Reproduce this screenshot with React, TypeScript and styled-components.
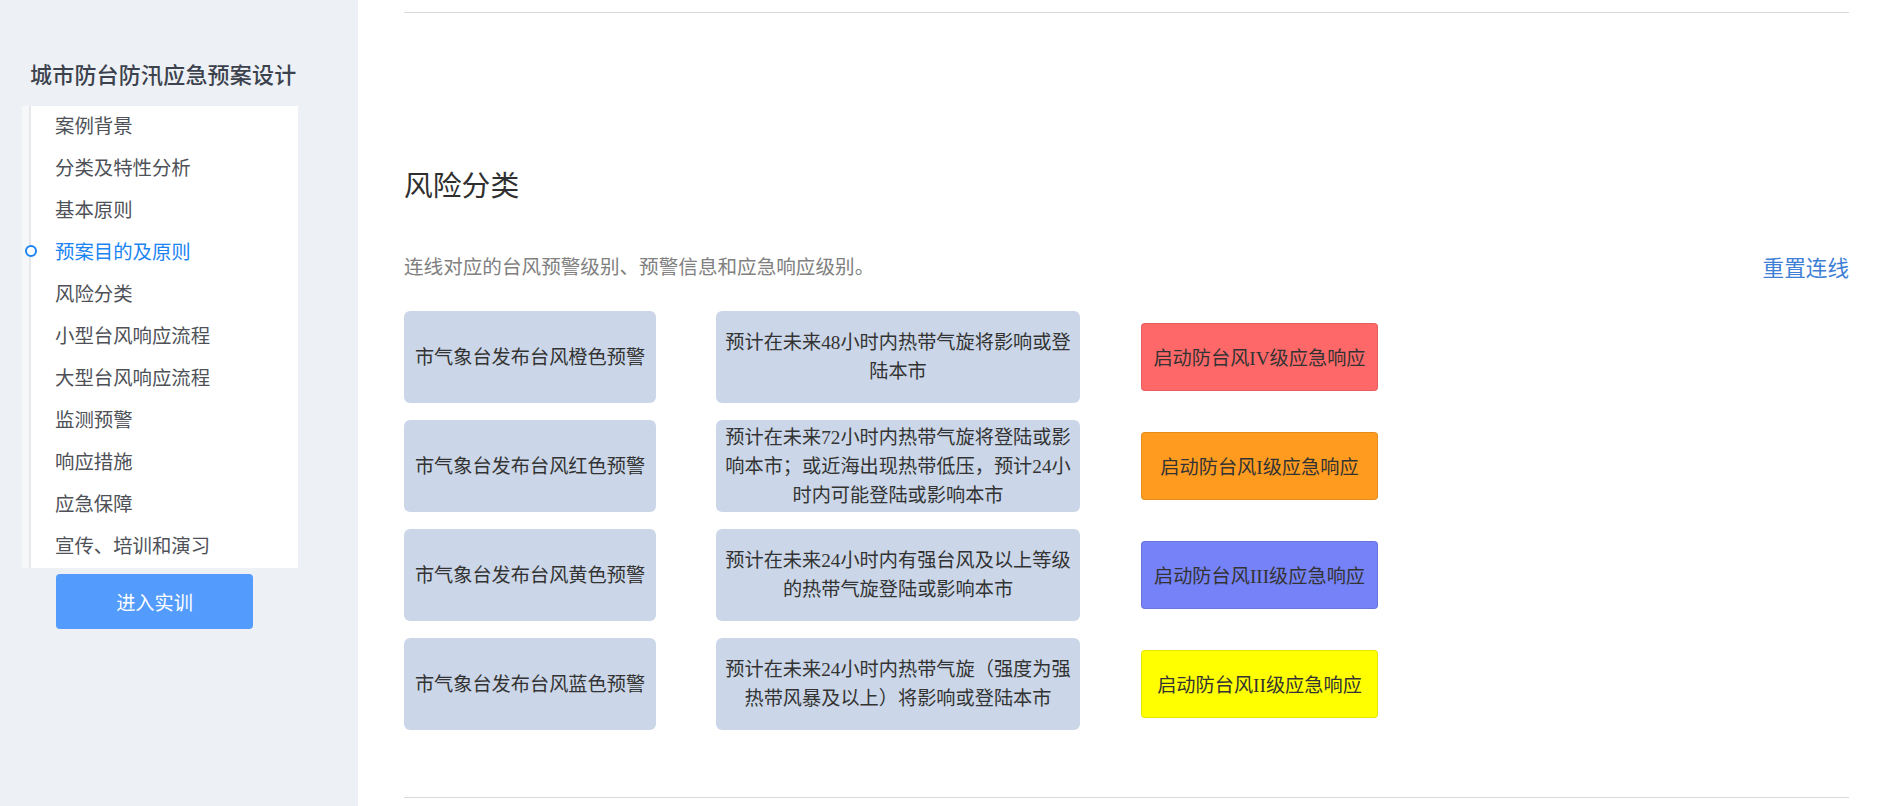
import React from 'react';
import styled, { createGlobalStyle } from 'styled-components';

const GlobalStyle = createGlobalStyle`
  html, body {
    margin: 0;
    padding: 0;
    background: #ffffff;
  }
  * {
    box-sizing: border-box;
  }
`;

const SERIF = `"Liberation Serif", "Noto Sans CJK SC", serif`;
const SANS = `"Noto Sans CJK SC", "Noto Sans", sans-serif`;

const Page = styled.div`
  display: flex;
  width: 100%;
  height: 100vh;
  overflow: hidden;
`;

const Sidebar = styled.aside`
  flex: 0 0 358px;
  background-color: #edf1f5;
  padding-top: 58px;
  display: flex;
  flex-direction: column;
`;

const SideTitle = styled.h2`
  margin: 0 0 18px 30px;
  font-family: ${SANS};
  font-size: 22px;
  line-height: 30px;
  font-weight: 500;
  color: #3c424d;
  letter-spacing: 0.2px;
`;

const MenuBox = styled.div`
  margin-left: 22px;
  width: 276px;
  background-color: #ffffff;
  display: flex;
`;

const InkRail = styled.div`
  flex: 0 0 9px;
  background-color: #f6f7f9;
  border-right: 2px solid #e6e8eb;
`;

const MenuList = styled.ul`
  list-style: none;
  margin: 0;
  padding: 0 0 0 24px;
  flex: 1;
`;

const MenuItem = styled.li<{ $active?: boolean }>`
  position: relative;
  height: 42px;
  line-height: 38px;
  font-family: ${SANS};
  font-size: 19.4px;
  color: ${(p) => (p.$active ? '#1b84f2' : '#4e5157')};
  white-space: nowrap;
`;

const InkDot = styled.span`
  position: absolute;
  left: -30px;
  top: 19px;
  width: 12px;
  height: 12px;
  margin-top: -6px;
  border-radius: 50%;
  border: 2.5px solid #1b84f2;
  background-color: #ffffff;
`;

const TrainButton = styled.button`
  margin: 6px 0 0 56px;
  width: 197px;
  height: 55px;
  border: none;
  border-radius: 4px;
  background-color: #539cfd;
  color: #ffffff;
  font-family: ${SERIF};
  font-size: 19.2px;
  cursor: pointer;
`;

const Main = styled.main`
  flex: 1;
  padding: 12px 32px 0 46px;
  display: flex;
  flex-direction: column;
`;

const Divider = styled.div<{ $top?: number }>`
  height: 1px;
  margin-top: ${(p) => p.$top ?? 0}px;
  background-color: #d9d9d9;
`;

const SectionTitle = styled.h1`
  margin: 153px 0 0 0;
  font-family: ${SERIF};
  font-size: 28.8px;
  line-height: 40px;
  font-weight: normal;
  color: #2f2f2f;
`;

const HintRow = styled.div`
  margin-top: 44px;
  display: flex;
  justify-content: space-between;
  align-items: center;
  height: 30px;
`;

const Hint = styled.p`
  margin: 0;
  font-family: ${SERIF};
  font-size: 19.6px;
  color: #808080;
`;

const ResetLink = styled.a`
  font-family: ${SERIF};
  font-size: 21.6px;
  color: #3f80d6;
  cursor: pointer;
  margin-top: 3px;
`;

const Board = styled.div`
  margin-top: 31px;
  display: flex;
  flex-direction: column;
  gap: 17px;
`;

const MatchRow = styled.div`
  display: flex;
  align-items: center;
  height: 92px;
`;

const InfoCard = styled.div<{ $width: number; $gap: number }>`
  flex: 0 0 ${(p) => p.$width}px;
  height: 92px;
  margin-right: ${(p) => p.$gap}px;
  padding: 0 8px;
  border-radius: 6px;
  background-color: #cbd7e8;
  display: flex;
  align-items: center;
  justify-content: center;
  text-align: center;
  font-family: ${SERIF};
  font-size: 19.2px;
  line-height: 29px;
  color: #333333;
`;

const LevelCard = styled.div<{ $color: string }>`
  flex: 0 0 237px;
  height: 68px;
  border-radius: 4px;
  border: 1px solid rgba(0, 0, 0, 0.1);
  background-color: ${(p) => p.$color};
  display: flex;
  align-items: center;
  justify-content: center;
  font-family: ${SERIF};
  font-size: 19.2px;
  color: #333333;
  white-space: nowrap;
`;

const menu = [
  '案例背景',
  '分类及特性分析',
  '基本原则',
  '预案目的及原则',
  '风险分类',
  '小型台风响应流程',
  '大型台风响应流程',
  '监测预警',
  '响应措施',
  '应急保障',
  '宣传、培训和演习',
];

const rows = [
  {
    warning: '市气象台发布台风橙色预警',
    info: '预计在未来48小时内热带气旋将影响或登陆本市',
    level: '启动防台风IV级应急响应',
    color: '#ff6868',
  },
  {
    warning: '市气象台发布台风红色预警',
    info: '预计在未来72小时内热带气旋将登陆或影响本市；或近海出现热带低压，预计24小时内可能登陆或影响本市',
    level: '启动防台风I级应急响应',
    color: '#ff9b1f',
  },
  {
    warning: '市气象台发布台风黄色预警',
    info: '预计在未来24小时内有强台风及以上等级的热带气旋登陆或影响本市',
    level: '启动防台风III级应急响应',
    color: '#7682f7',
  },
  {
    warning: '市气象台发布台风蓝色预警',
    info: '预计在未来24小时内热带气旋（强度为强热带风暴及以上）将影响或登陆本市',
    level: '启动防台风II级应急响应',
    color: '#ffff00',
  },
];

const App: React.FC = () => {
  const activeIndex = 3;

  return (
    <>
      <GlobalStyle />
      <Page>
        <Sidebar>
          <SideTitle>城市防台防汛应急预案设计</SideTitle>
          <MenuBox>
            <InkRail />
            <MenuList>
              {menu.map((item, i) => (
                <MenuItem key={item} $active={i === activeIndex}>
                  {i === activeIndex && <InkDot />}
                  {item}
                </MenuItem>
              ))}
            </MenuList>
          </MenuBox>
          <TrainButton>进入实训</TrainButton>
        </Sidebar>

        <Main>
          <Divider />
          <SectionTitle>风险分类</SectionTitle>
          <HintRow>
            <Hint>连线对应的台风预警级别、预警信息和应急响应级别。</Hint>
            <ResetLink>重置连线</ResetLink>
          </HintRow>
          <Board>
            {rows.map((row) => (
              <MatchRow key={row.warning}>
                <InfoCard $width={252} $gap={60}>{row.warning}</InfoCard>
                <InfoCard $width={364} $gap={61}>{row.info}</InfoCard>
                <LevelCard $color={row.color}>{row.level}</LevelCard>
              </MatchRow>
            ))}
          </Board>
          <Divider $top={67} />
        </Main>
      </Page>
    </>
  );
};

export default App;
